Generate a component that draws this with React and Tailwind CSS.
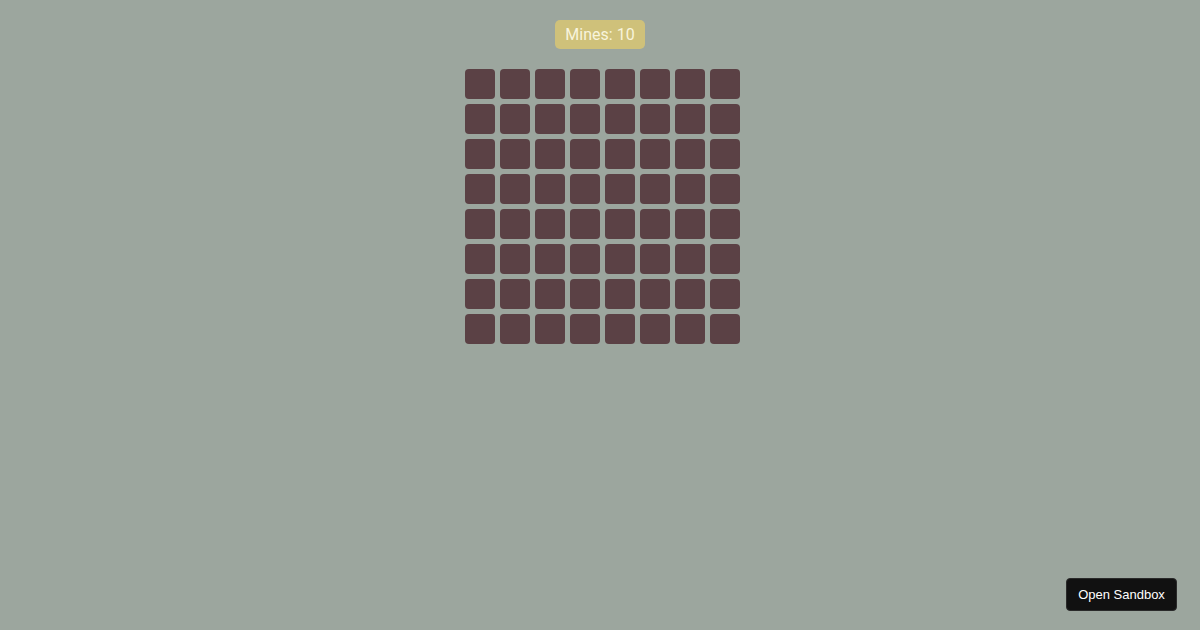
export default function App() {
  const cells = Array.from({ length: 64 });
  return (
    <div className="w-[1200px] h-[630px] bg-[#9ca69e] relative overflow-hidden" style={{ fontFamily: "Roboto, sans-serif" }}>
      <div className="flex flex-col items-center pt-5">
        <div className="h-[29px] px-[10px] flex items-center rounded-[5px] bg-[#cfc17a] text-[#f8f4dc] text-[16px] leading-none">
          Mines: 10
        </div>
        <div className="mt-5 w-[280px] pl-[5px] grid grid-cols-[repeat(8,30px)] gap-[5px]">
          {cells.map((_, i) => (
            <div key={i} className="w-[30px] h-[30px] rounded-[4px] bg-[#5b4145]" />
          ))}
        </div>
      </div>
      <button className="absolute left-[1066px] top-[578px] w-[111px] h-[33px] rounded-[4px] bg-[#111111] text-white text-[13px] flex items-center justify-center border border-[#2a2a2a]" style={{ fontFamily: "'Liberation Sans', Arial, sans-serif" }}>
        Open Sandbox
      </button>
    </div>
  );
}
